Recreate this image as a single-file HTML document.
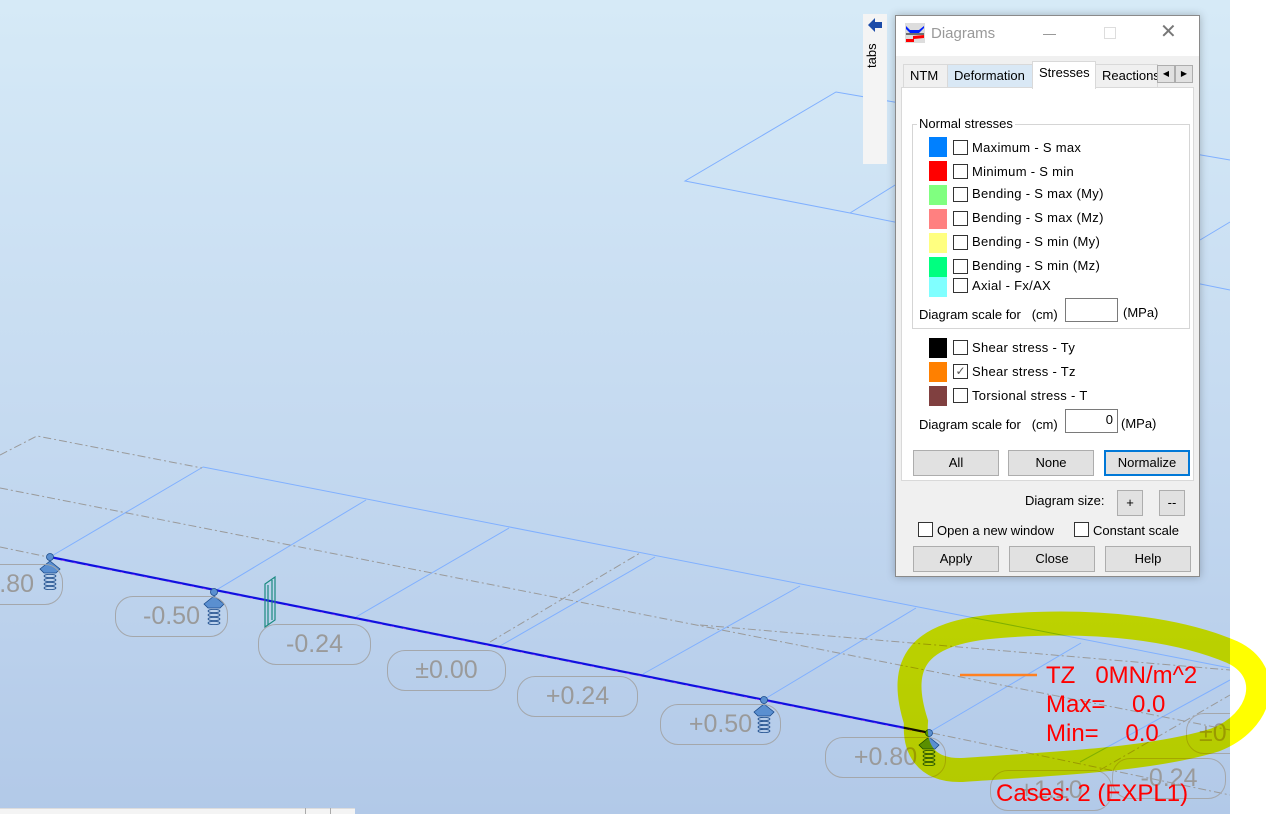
<!DOCTYPE html>
<html><head><meta charset="utf-8"><style>
*{margin:0;padding:0;box-sizing:border-box}
body{width:1266px;height:814px;overflow:hidden;position:relative;background:linear-gradient(#d6eaf7,#c4d9f0 55%,#b2c9e8);font-family:"Liberation Sans","DejaVu Sans",sans-serif;font-size:13px;color:#000}
.a{position:absolute}
.dlg{left:895px;top:15px;width:305px;height:562px;background:#f0f0f0;border:1px solid #8a8a8a;box-shadow:0 0 8px rgba(0,0,0,.25)}
.sw{position:absolute;left:27px;width:18px;height:20px}
.cb{position:absolute;left:51px;width:15px;height:15px;border:1px solid #333;background:#fff}
.lb{position:absolute;left:70px;white-space:nowrap;letter-spacing:0.3px}
.btn{position:absolute;height:26px;background:#e1e1e1;border:1px solid #adadad;text-align:center;line-height:24px;font-size:13px}
.tab{position:absolute;top:48px;height:24px;border:1px solid #d9d9d9;border-bottom:none;line-height:22px;padding-left:6px;font-size:13px;background:#f0f0f0;overflow:hidden;white-space:nowrap}
.inp{position:absolute;width:53px;height:24px;border:1px solid #7a7a7a;background:#fff;text-align:right;padding-right:4px;line-height:20px;font-size:13px}
.pill{position:absolute;border:1.3px solid #a4a7ab;border-radius:18px;color:#9a9a9a;font-family:"Liberation Sans",sans-serif;font-size:25px;text-align:center;line-height:38px;height:41px}
.red{position:absolute;color:#ff0000;font-family:"Liberation Sans",sans-serif;font-size:24px;white-space:pre}
</style></head><body>
<svg class="a" style="left:0;top:0" width="1266" height="814">
 <g stroke="#80b0ff" stroke-width="1" fill="none">
  <polyline points="1230,160 836,92 685,181 850,213 1230,290"/>
  <line x1="850" y1="213" x2="900" y2="182"/>
  <line x1="1200" y1="240" x2="1230" y2="222"/>
  <line x1="203" y1="467" x2="1230" y2="668"/>
  <line x1="50" y1="557" x2="203" y2="467"/>
  <line x1="213" y1="592" x2="366" y2="500"/>
  <line x1="356" y1="617" x2="509" y2="528"/>
  <line x1="500" y1="646" x2="655" y2="557"/>
  <line x1="643" y1="674" x2="800" y2="586"/>
  <line x1="763" y1="700" x2="916" y2="608"/>
  <line x1="928" y1="733" x2="1081" y2="643"/>
  <line x1="1080" y1="762" x2="1230" y2="680"/>
 </g>
 <g stroke="#9a9a9a" stroke-width="1" fill="none" stroke-dasharray="8,3,2,3">
  <polyline points="0,455 37,436 202,468"/>
  <line x1="0" y1="488" x2="1230" y2="730"/>
  <line x1="0" y1="547" x2="53" y2="558"/>
  <line x1="490" y1="642" x2="640" y2="553"/>
  <line x1="700" y1="625" x2="1230" y2="670"/>
  <line x1="932" y1="733" x2="1230" y2="795"/>
  <line x1="1100" y1="770" x2="1230" y2="695"/>
 </g>
 <line x1="50" y1="557" x2="930" y2="733" stroke="#1010e0" stroke-width="2.2"/>
 <line x1="50" y1="558" x2="930" y2="734" stroke="#c040ff" stroke-width="0.6" stroke-dasharray="3,9"/>
 <g fill="#5a8fd0" stroke="#1a4a8a" stroke-width="0.8">
  <g transform="translate(50,557)"><circle r="3.5"/><path d="M-10,12 L0,4 L10,12 L6,16 L-6,16Z"/><g fill="none"><ellipse cx="0" cy="19" rx="6" ry="1.6"/><ellipse cx="0" cy="23" rx="6" ry="1.6"/><ellipse cx="0" cy="27" rx="6" ry="1.6"/><ellipse cx="0" cy="31" rx="6" ry="1.6"/></g></g>
  <g transform="translate(214,592)"><circle r="3.5"/><path d="M-10,12 L0,4 L10,12 L6,16 L-6,16Z"/><g fill="none"><ellipse cx="0" cy="19" rx="6" ry="1.6"/><ellipse cx="0" cy="23" rx="6" ry="1.6"/><ellipse cx="0" cy="27" rx="6" ry="1.6"/><ellipse cx="0" cy="31" rx="6" ry="1.6"/></g></g>
  <g transform="translate(764,700)"><circle r="3.5"/><path d="M-10,12 L0,4 L10,12 L6,16 L-6,16Z"/><g fill="none"><ellipse cx="0" cy="19" rx="6" ry="1.6"/><ellipse cx="0" cy="23" rx="6" ry="1.6"/><ellipse cx="0" cy="27" rx="6" ry="1.6"/><ellipse cx="0" cy="31" rx="6" ry="1.6"/></g></g>
  <g transform="translate(929,733)"><circle r="3.5"/><path d="M-10,12 L0,4 L10,12 L6,16 L-6,16Z"/><g fill="none"><ellipse cx="0" cy="19" rx="6" ry="1.6"/><ellipse cx="0" cy="23" rx="6" ry="1.6"/><ellipse cx="0" cy="27" rx="6" ry="1.6"/><ellipse cx="0" cy="31" rx="6" ry="1.6"/></g></g>
 </g>
 <path d="M265,584 L275,577 L275,620 L265,627 Z M268,585v40 M272,580v40" stroke="#1a8a80" stroke-width="1.2" fill="none"/>
 <line x1="960" y1="675" x2="1037" y2="675" stroke="#ff8020" stroke-width="2.5"/>
</svg>
<div class="pill" style="left:-50px;top:564px;width:113px;text-align:right;padding-right:28px">.80</div>
<div class="pill" style="left:115px;top:596px;width:113px">-0.50</div>
<div class="pill" style="left:258px;top:624px;width:113px">-0.24</div>
<div class="pill" style="left:387px;top:650px;width:119px">±0.00</div>
<div class="pill" style="left:517px;top:676px;width:121px">+0.24</div>
<div class="pill" style="left:660px;top:704px;width:121px">+0.50</div>
<div class="pill" style="left:825px;top:737px;width:121px">+0.80</div>
<div class="pill" style="left:990px;top:770px;width:122px">+1.10</div>
<div class="pill" style="left:1112px;top:758px;width:114px">-0.24</div>
<div class="pill" style="left:1186px;top:713px;width:90px;text-align:left;padding-left:12px">±0</div>
<div class="a" style="left:1230px;top:0;width:36px;height:814px;background:#fff"></div>
<div class="a" style="left:0;top:808px;width:355px;height:6px;background:#f4f4f4;border-top:1px solid #ddd"></div>
<div class="a" style="left:305px;top:808px;width:1px;height:6px;background:#aaa"></div>
<div class="a" style="left:330px;top:808px;width:1px;height:6px;background:#aaa"></div>
<svg class="a" style="left:0;top:0;mix-blend-mode:multiply" width="1266" height="814">
 <path d="M916,722 C897,662 918,632 1000,626 C1100,618 1180,630 1232,652 C1275,672 1262,722 1215,740 C1150,760 1050,764 962,770 C925,771 914,748 916,722 Z" stroke="#ffff00" stroke-width="24" fill="none"/>
</svg>
<div class="red" style="left:1046px;top:662px">TZ   0MN/m^2</div>
<div class="red" style="left:1046px;top:691px">Max=    0.0</div>
<div class="red" style="left:1046px;top:720px">Min=    0.0</div>
<div class="red" style="left:996px;top:780px">Cases: 2 (EXPL1)</div>
<div class="a" style="left:863px;top:14px;width:24px;height:150px;background:#f4f4f4"></div>
<svg class="a" style="left:866px;top:17px" width="18" height="16"><path d="M2,8 L9,1 L9,5 L16,5 L16,11 L9,11 L9,15 Z" fill="#1a4aa8"/></svg>
<div class="a" style="left:866px;top:36px;width:18px;height:32px;"><div style="transform:rotate(-90deg) translate(-22px,-2px);transform-origin:0 0;position:absolute;top:10px;left:0;font-size:13px;font-family:'Liberation Sans',sans-serif;white-space:nowrap">tabs</div></div>
<div class="a dlg">
 <div class="a" style="left:0;top:0;width:303px;height:40px;background:#fff"></div>
 <svg class="a" style="left:9px;top:7px" width="20" height="20"><rect width="20" height="20" fill="#ddd"/><path d="M1,3 L5,7 L14,7 L19,3 L19,5 L14,10 L5,10 L1,6Z" fill="#0020ff"/><line x1="1" y1="11" x2="19" y2="11" stroke="#000"/><path d="M1,19 L1,16 L8,16 L8,13 L19,12 L19,15 L9,16 L9,19Z" fill="#ff0000"/></svg>
 <div class="a" style="left:35px;top:9px;font-size:15px;color:#999">Diagrams</div>
 <div class="a" style="left:147px;top:18px;width:13px;height:1px;background:#999"></div>
 <div class="a" style="left:208px;top:11px;width:12px;height:12px;border:1px solid #ddd"></div>
 <div class="a" style="left:264px;top:3px;font-size:20px;color:#777;font-family:'DejaVu Sans',sans-serif">✕</div>
 <div class="tab" style="left:7px;width:45px">NTM</div>
 <div class="tab" style="left:51px;width:86px;background:#d9e8f5">Deformation</div>
 <div class="tab" style="left:136px;top:45px;height:28px;width:64px;background:#fff;z-index:2">Stresses</div>
 <div class="tab" style="left:199px;width:63px">Reactions</div>
 <div class="a" style="left:261px;top:49px;width:18px;height:18px;border:1px solid #adadad;background:#e1e1e1;font-size:8px;text-align:center;line-height:16px">◀</div>
 <div class="a" style="left:279px;top:49px;width:18px;height:18px;border:1px solid #adadad;background:#e1e1e1;font-size:8px;text-align:center;line-height:16px">▶</div>
 <div class="a" style="left:5px;top:71px;width:293px;height:394px;background:#fff;border:1px solid #d9d9d9">
  <div class="a" style="left:10px;top:36px;width:278px;height:205px;border:1px solid #d5d5d5"></div>
  <div class="a" style="left:15px;top:28px;background:#fff;padding:0 2px">Normal stresses</div>
  <div class="sw" style="top:49px;background:#0080ff"></div><div class="cb" style="top:52px"></div><div class="lb" style="top:52px">Maximum - S max</div>
  <div class="sw" style="top:73px;background:#ff0000"></div><div class="cb" style="top:76px"></div><div class="lb" style="top:76px">Minimum - S min</div>
  <div class="sw" style="top:97px;background:#80ff80"></div><div class="cb" style="top:99px"></div><div class="lb" style="top:98px">Bending - S max (My)</div>
  <div class="sw" style="top:121px;background:#ff8080"></div><div class="cb" style="top:123px"></div><div class="lb" style="top:122px">Bending - S max (Mz)</div>
  <div class="sw" style="top:145px;background:#ffff80"></div><div class="cb" style="top:147px"></div><div class="lb" style="top:146px">Bending - S min (My)</div>
  <div class="sw" style="top:169px;background:#00ff80"></div><div class="cb" style="top:171px"></div><div class="lb" style="top:170px">Bending - S min (Mz)</div>
  <div class="sw" style="top:189px;background:#80ffff"></div><div class="cb" style="top:190px"></div><div class="lb" style="top:190px">Axial - Fx/AX</div>
  <div class="lb" style="left:17px;top:219px;letter-spacing:0">Diagram scale for &nbsp;&nbsp;(cm)</div>
  <div class="inp" style="left:163px;top:210px"></div>
  <div class="lb" style="left:221px;top:217px;letter-spacing:0">(MPa)</div>
  <div class="sw" style="top:250px;background:#000"></div><div class="cb" style="top:252px"></div><div class="lb" style="top:252px">Shear stress - Ty</div>
  <div class="sw" style="top:274px;background:#ff8000"></div><div class="cb" style="top:276px;font-size:12px;line-height:12px;text-align:center;color:#555;font-family:'DejaVu Sans',sans-serif">✓</div><div class="lb" style="top:276px">Shear stress - Tz</div>
  <div class="sw" style="top:298px;background:#804040"></div><div class="cb" style="top:300px"></div><div class="lb" style="top:300px">Torsional stress - T</div>
  <div class="lb" style="left:17px;top:329px;letter-spacing:0">Diagram scale for &nbsp;&nbsp;(cm)</div>
  <div class="inp" style="left:163px;top:321px">0</div>
  <div class="lb" style="left:219px;top:328px;letter-spacing:0">(MPa)</div>
  <div class="btn" style="left:11px;top:362px;width:86px">All</div>
  <div class="btn" style="left:106px;top:362px;width:86px">None</div>
  <div class="btn" style="left:202px;top:362px;width:86px;border:2px solid #0078d7;line-height:22px">Normalize</div>
 </div>
 <div class="a" style="left:129px;top:477px">Diagram size:</div>
 <div class="btn" style="left:221px;top:474px;width:26px">+</div>
 <div class="btn" style="left:263px;top:474px;width:26px">--</div>
 <div class="cb" style="left:22px;top:506px"></div><div class="a" style="left:41px;top:507px">Open a new window</div>
 <div class="cb" style="left:178px;top:506px"></div><div class="a" style="left:197px;top:507px">Constant scale</div>
 <div class="btn" style="left:17px;top:530px;width:86px">Apply</div>
 <div class="btn" style="left:113px;top:530px;width:86px">Close</div>
 <div class="btn" style="left:209px;top:530px;width:86px">Help</div>
</div>
</body></html>
